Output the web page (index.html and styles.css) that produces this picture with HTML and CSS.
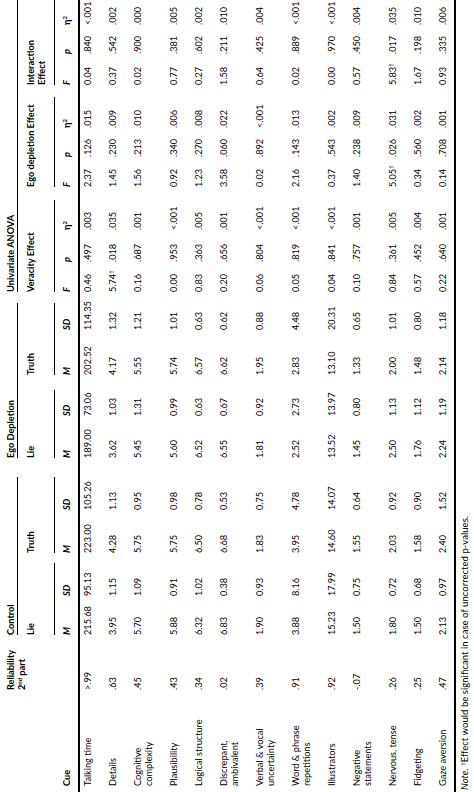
FILE: index.html
```html
<!DOCTYPE html>
<html lang="en">
<head>
<meta charset="utf-8">
<title>Table</title>
<link rel="stylesheet" href="styles.css">
</head>
<body>
<div class="frame">
<div class="page">
<table class="t">
<colgroup>
<col class="c-cue"><col class="c-rel">
<col class="c39"><col class="c43"><col class="c43"><col class="c52">
<col class="c42"><col class="c41"><col class="c45"><col class="c38">
<col class="c30"><col class="c32"><col class="c43">
<col class="c30"><col class="c29"><col class="c43">
<col class="c31"><col class="c29"><col class="c25">
</colgroup>
<thead>
<tr class="h1">
<th rowspan="3" class="cue">Cue</th>
<th rowspan="3" class="rel">Reliability<br>2<sup>nd</sup> part</th>
<th colspan="4" class="u g19">Control</th>
<th colspan="4" class="u g11">Ego Depletion</th>
<th colspan="9" class="u">Univariate ANOVA</th>
</tr>
<tr class="h2">
<th colspan="2" class="u g10">Lie</th>
<th colspan="2" class="u g19">Truth</th>
<th colspan="2" class="u g15">Lie</th>
<th colspan="2" class="u g11">Truth</th>
<th colspan="3" class="u g13">Veracity Effect</th>
<th colspan="3" class="u g12">Ego depletion Effect</th>
<th colspan="3" class="u">Interaction<br>Effect</th>
</tr>
<tr class="h3">
<th class="i">M</th><th class="i">SD</th><th class="i">M</th><th class="i">SD</th>
<th class="i">M</th><th class="i">SD</th><th class="i">M</th><th class="i">SD</th>
<th class="i">F</th><th class="i">p</th><th>η<sup>2</sup></th>
<th class="i">F</th><th class="i">p</th><th>η<sup>2</sup></th>
<th class="i">F</th><th class="i">p</th><th>η<sup>2</sup></th>
</tr>
</thead>
<tbody>
<tr><td class="cue">Talking time</td><td>&gt;.99</td><td>215.68</td><td>95.13</td><td>223.00</td><td>105.26</td><td>189.00</td><td>73.06</td><td>202.52</td><td>114.35</td><td>0.46</td><td>.497</td><td>.003</td><td>2.37</td><td>.126</td><td>.015</td><td>0.04</td><td>.840</td><td>&lt;.001</td></tr>
<tr><td class="cue">Details</td><td>.63</td><td>3.95</td><td>1.15</td><td>4.28</td><td>1.13</td><td>3.62</td><td>1.03</td><td>4.17</td><td>1.32</td><td>5.74<sup>†</sup></td><td>.018</td><td>.035</td><td>1.45</td><td>.230</td><td>.009</td><td>0.37</td><td>.542</td><td>.002</td></tr>
<tr><td class="cue">Cognitive<br>complexity</td><td>.45</td><td>5.70</td><td>1.09</td><td>5.75</td><td>0.95</td><td>5.45</td><td>1.31</td><td>5.55</td><td>1.21</td><td>0.16</td><td>.687</td><td>.001</td><td>1.56</td><td>.213</td><td>.010</td><td>0.02</td><td>.900</td><td>.000</td></tr>
<tr><td class="cue">Plausibility</td><td>.43</td><td>5.88</td><td>0.91</td><td>5.75</td><td>0.98</td><td>5.60</td><td>0.99</td><td>5.74</td><td>1.01</td><td>0.00</td><td>.953</td><td>&lt;.001</td><td>0.92</td><td>.340</td><td>.006</td><td>0.77</td><td>.381</td><td>.005</td></tr>
<tr><td class="cue">Logical structure</td><td>.34</td><td>6.32</td><td>1.02</td><td>6.50</td><td>0.78</td><td>6.52</td><td>0.63</td><td>6.57</td><td>0.63</td><td>0.83</td><td>.363</td><td>.005</td><td>1.23</td><td>.270</td><td>.008</td><td>0.27</td><td>.602</td><td>.002</td></tr>
<tr><td class="cue">Discrepant,<br>ambivalent</td><td>.02</td><td>6.83</td><td>0.38</td><td>6.68</td><td>0.53</td><td>6.55</td><td>0.67</td><td>6.62</td><td>0.62</td><td>0.20</td><td>.656</td><td>.001</td><td>3.58</td><td>.060</td><td>.022</td><td>1.58</td><td>.211</td><td>.010</td></tr>
<tr><td class="cue">Verbal &amp; vocal<br>uncertainty</td><td>.39</td><td>1.90</td><td>0.93</td><td>1.83</td><td>0.75</td><td>1.81</td><td>0.92</td><td>1.95</td><td>0.88</td><td>0.06</td><td>.804</td><td>&lt;.001</td><td>0.02</td><td>.892</td><td>&lt;.001</td><td>0.64</td><td>.425</td><td>.004</td></tr>
<tr><td class="cue">Word &amp; phrase<br>repetitions</td><td>.91</td><td>3.88</td><td>8.16</td><td>3.95</td><td>4.78</td><td>2.52</td><td>2.73</td><td>2.83</td><td>4.48</td><td>0.05</td><td>.819</td><td>&lt;.001</td><td>2.16</td><td>.143</td><td>.013</td><td>0.02</td><td>.889</td><td>&lt;.001</td></tr>
<tr><td class="cue">Illustrators</td><td>.92</td><td>15.23</td><td>17.99</td><td>14.60</td><td>14.07</td><td>13.52</td><td>13.97</td><td>13.10</td><td>20.31</td><td>0.04</td><td>.841</td><td>&lt;.001</td><td>0.37</td><td>.543</td><td>.002</td><td>0.00</td><td>.970</td><td>&lt;.001</td></tr>
<tr><td class="cue">Negative<br>statements</td><td>-.07</td><td>1.50</td><td>0.75</td><td>1.55</td><td>0.64</td><td>1.45</td><td>0.80</td><td>1.33</td><td>0.65</td><td>0.10</td><td>.757</td><td>.001</td><td>1.40</td><td>.238</td><td>.009</td><td>0.57</td><td>.450</td><td>.004</td></tr>
<tr><td class="cue">Nervous, tense</td><td>.26</td><td>1.80</td><td>0.72</td><td>2.03</td><td>0.92</td><td>2.50</td><td>1.13</td><td>2.00</td><td>1.01</td><td>0.84</td><td>.361</td><td>.005</td><td>5.05<sup>†</sup></td><td>.026</td><td>.031</td><td>5.83<sup>†</sup></td><td>.017</td><td>.035</td></tr>
<tr><td class="cue">Fidgeting</td><td>.25</td><td>1.50</td><td>0.68</td><td>1.58</td><td>0.90</td><td>1.76</td><td>1.12</td><td>1.48</td><td>0.80</td><td>0.57</td><td>.452</td><td>.004</td><td>0.34</td><td>.560</td><td>.002</td><td>1.67</td><td>.198</td><td>.010</td></tr>
<tr class="last"><td class="cue">Gaze aversion</td><td>.47</td><td>2.13</td><td>0.97</td><td>2.40</td><td>1.52</td><td>2.24</td><td>1.19</td><td>2.14</td><td>1.18</td><td>0.22</td><td>.640</td><td>.001</td><td>0.14</td><td>.708</td><td>.001</td><td>0.93</td><td>.335</td><td>.006</td></tr>
</tbody>
</table>
<p class="note"><em>Note.</em> <sup>†</sup>Effect would be significant in case of uncorrected p-values.</p>
</div>
</div>
</body>
</html>
```
FILE: styles.css
```css
html, body {
  margin: 0;
  padding: 0;
  background: #fff;
}

.frame {
  width: 474px;
  height: 792px;
  overflow: hidden;
}

.page {
  width: 792px;
  height: 474px;
  transform-origin: 0 0;
  transform: translateY(792px) rotate(-90deg);
  font-family: Lato, "Liberation Sans", sans-serif;
  font-size: 9.2px;
  line-height: 11px;
  color: #000;
}

.t {
  width: 792px;
  table-layout: fixed;
  border-collapse: collapse;
  border-spacing: 0;
}

.c-cue { width: 102px; }
.c-rel { width: 55px; }
.c25 { width: 25px; }
.c29 { width: 29px; }
.c30 { width: 30px; }
.c31 { width: 31px; }
.c32 { width: 32px; }
.c38 { width: 38px; }
.c39 { width: 39px; }
.c41 { width: 41px; }
.c42 { width: 42px; }
.c43 { width: 43px; }
.c45 { width: 45px; }
.c52 { width: 52px; }

.t th,
.t td {
  padding: 0;
  text-align: left;
  vertical-align: top;
  white-space: nowrap;
}

.t th {
  font-weight: 700;
}

.t th.i {
  font-style: italic;
}

.t .cue {
  padding-left: 6px;
}

.h1 th {
  padding-top: 5px;
  padding-bottom: 2px;
}

.h1 th.cue {
  vertical-align: bottom;
  padding-bottom: 6px;
}

.h2 th {
  padding-top: 7px;
  padding-bottom: 8px;
}

.h3 th {
  padding-top: 6px;
  padding-bottom: 6px;
}

.h3 {
  border-bottom: 2px solid #000;
}

.u {
  background-image: linear-gradient(#000, #000);
  background-repeat: no-repeat;
  background-position: left bottom;
  background-size: calc(100% - var(--gap, 0px)) 1px;
}

.g10 { --gap: 10px; }
.g11 { --gap: 11px; }
.g12 { --gap: 12px; }
.g13 { --gap: 13px; }
.g15 { --gap: 15px; }
.g19 { --gap: 19px; }

.t td {
  padding-top: 2px;
  padding-bottom: 12px;
}

.t tr.last td {
  padding-bottom: 6px;
}

.t tr.last {
  border-bottom: 2px solid #000;
}

sup {
  font-size: 6px;
  line-height: 0;
  vertical-align: 3px;
}

.note {
  margin: 3px 0 0;
  padding-left: 2px;
  font-size: 9.6px;
}

.note em {
  font-style: italic;
}
```
